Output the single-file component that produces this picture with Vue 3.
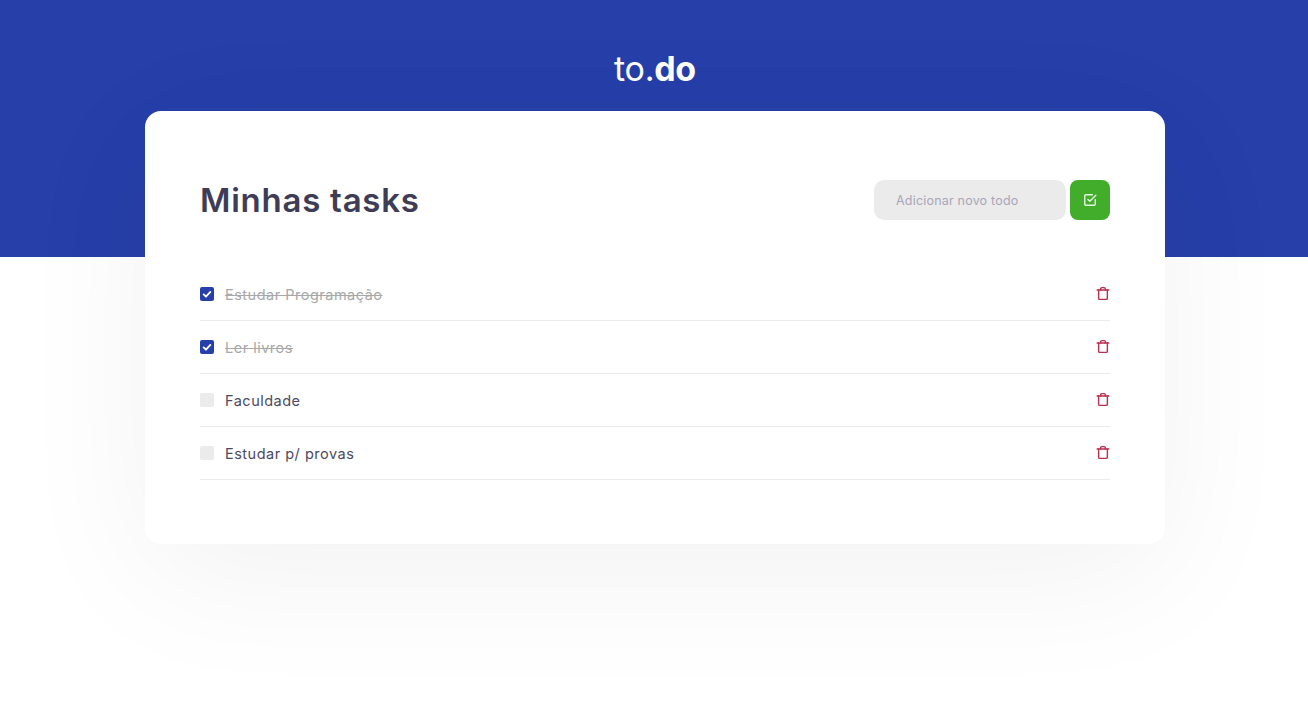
<template>
  <div class="page">
    <header class="top">
      <h1 class="logo">to.<strong>do</strong></h1>
    </header>

    <main class="card">
      <div class="card-head">
        <h2 class="title">Minhas tasks</h2>
        <form class="add-form" @submit.prevent="addTask">
          <input v-model="newTask" class="add-input" type="text" placeholder="Adicionar novo todo" />
          <button class="add-btn" type="submit" aria-label="Adicionar">
            <svg width="14" height="14" viewBox="0 0 24 24" fill="none" stroke="currentColor" stroke-width="2.4" stroke-linecap="round" stroke-linejoin="round">
              <path d="M21 11.5V19a2 2 0 0 1-2 2H5a2 2 0 0 1-2-2V5a2 2 0 0 1 2-2h11" />
              <path d="M8.5 11l3.2 3.2L22 4" />
            </svg>
          </button>
        </form>
      </div>

      <ul class="list">
        <li v-for="(task, i) in tasks" :key="task.name" class="row">
          <label class="task">
            <input v-model="task.done" class="check-input" type="checkbox" />
            <span class="check" :class="{ on: task.done }">
              <svg v-if="task.done" width="10" height="10" viewBox="0 0 24 24" fill="none" stroke="#fff" stroke-width="4.5" stroke-linecap="round" stroke-linejoin="round">
                <path d="M4 13l5.5 5.5L20 7" />
              </svg>
            </span>
            <span class="task-name" :class="{ done: task.done }">{{ task.name }}</span>
          </label>
          <button class="remove" type="button" aria-label="Remover" @click="tasks.splice(i, 1)">
            <svg width="14" height="15" viewBox="0 0 24 24" fill="none" stroke="currentColor" stroke-width="2.4" stroke-linecap="round" stroke-linejoin="round">
              <path d="M2 6h20" />
              <path d="M4.5 6v14a2 2 0 0 0 2 2h11a2 2 0 0 0 2-2V6" />
              <path d="M8 6V4a2 2 0 0 1 2-2h4a2 2 0 0 1 2 2v2" />
            </svg>
          </button>
        </li>
      </ul>
    </main>
  </div>
</template>

<script setup>
import { ref } from 'vue';

const newTask = ref('');
const tasks = ref([
  { name: 'Estudar Programação', done: true },
  { name: 'Ler livros', done: true },
  { name: 'Faculdade', done: false },
  { name: 'Estudar p/ provas', done: false },
]);

function addTask() {
  if (!newTask.value) return;
  tasks.value.push({ name: newTask.value, done: false });
  newTask.value = '';
}
</script>

<style>
html,
body {
  background: #fff;
}
</style>

<style scoped>
.page {
  height: 713px;
  overflow: hidden;
  font-family: "Inter", "Liberation Sans", sans-serif;
}

.top {
  height: 257px;
  background: #263fa9;
  display: flex;
  justify-content: center;
  padding: 48px 0 0 2px;
  box-sizing: border-box;
}

.logo {
  margin: 0;
  font-size: 34px;
  line-height: 42px;
  font-weight: 400;
  color: #fff;
  letter-spacing: -0.3px;
}

.logo strong {
  font-weight: 700;
}

.card {
  position: relative;
  width: 1020px;
  height: 433px;
  box-sizing: border-box;
  margin: -146px 0 0 145px;
  padding: 69px 55px 0;
  background: #fff;
  border-radius: 16px;
  box-shadow: 0 30px 140px rgba(0, 0, 0, 0.055);
}

.card-head {
  display: flex;
  justify-content: space-between;
  align-items: center;
  height: 40px;
  margin-bottom: 48px;
}

.title {
  margin: 0;
  font-size: 33px;
  font-weight: 600;
  color: #3f3d56;
  letter-spacing: 0.75px;
}

.add-form {
  display: flex;
  gap: 4px;
}

.add-input {
  width: 192px;
  height: 40px;
  box-sizing: border-box;
  padding: 0 22px;
  border: 0;
  border-radius: 10px;
  background: #ebebeb;
  font-family: inherit;
  font-size: 12.5px;
  letter-spacing: 0.2px;
  color: #3f3d56;
  outline: none;
}

.add-input::placeholder {
  color: #a8a6b8;
  opacity: 1;
}

.add-btn {
  width: 40px;
  height: 40px;
  padding: 0;
  border: 0;
  border-radius: 8px;
  background: #42ad2a;
  color: #e4f5df;
  display: flex;
  align-items: center;
  justify-content: center;
}

.list {
  margin: 0;
  padding: 0;
  list-style: none;
}

.row {
  height: 53px;
  box-sizing: border-box;
  display: flex;
  align-items: center;
  justify-content: space-between;
  border-bottom: 1px solid #ebebeb;
}

.task {
  display: flex;
  align-items: center;
  gap: 11px;
}

.check-input {
  display: none;
}

.check {
  width: 14px;
  height: 14px;
  border-radius: 2px;
  background: #ebebeb;
  display: flex;
  align-items: center;
  justify-content: center;
}

.check.on {
  background: #263fa9;
}

.task-name {
  padding-top: 2px;
  font-size: 14.5px;
  line-height: 20px;
  color: #4c4a5e;
  letter-spacing: 0.5px;
}

.task-name.done {
  color: #a8a8a8;
  text-decoration: line-through;
}

.remove {
  padding: 0;
  border: 0;
  background: none;
  color: #b9304f;
  display: flex;
  position: relative;
  top: -1px;
}
</style>
